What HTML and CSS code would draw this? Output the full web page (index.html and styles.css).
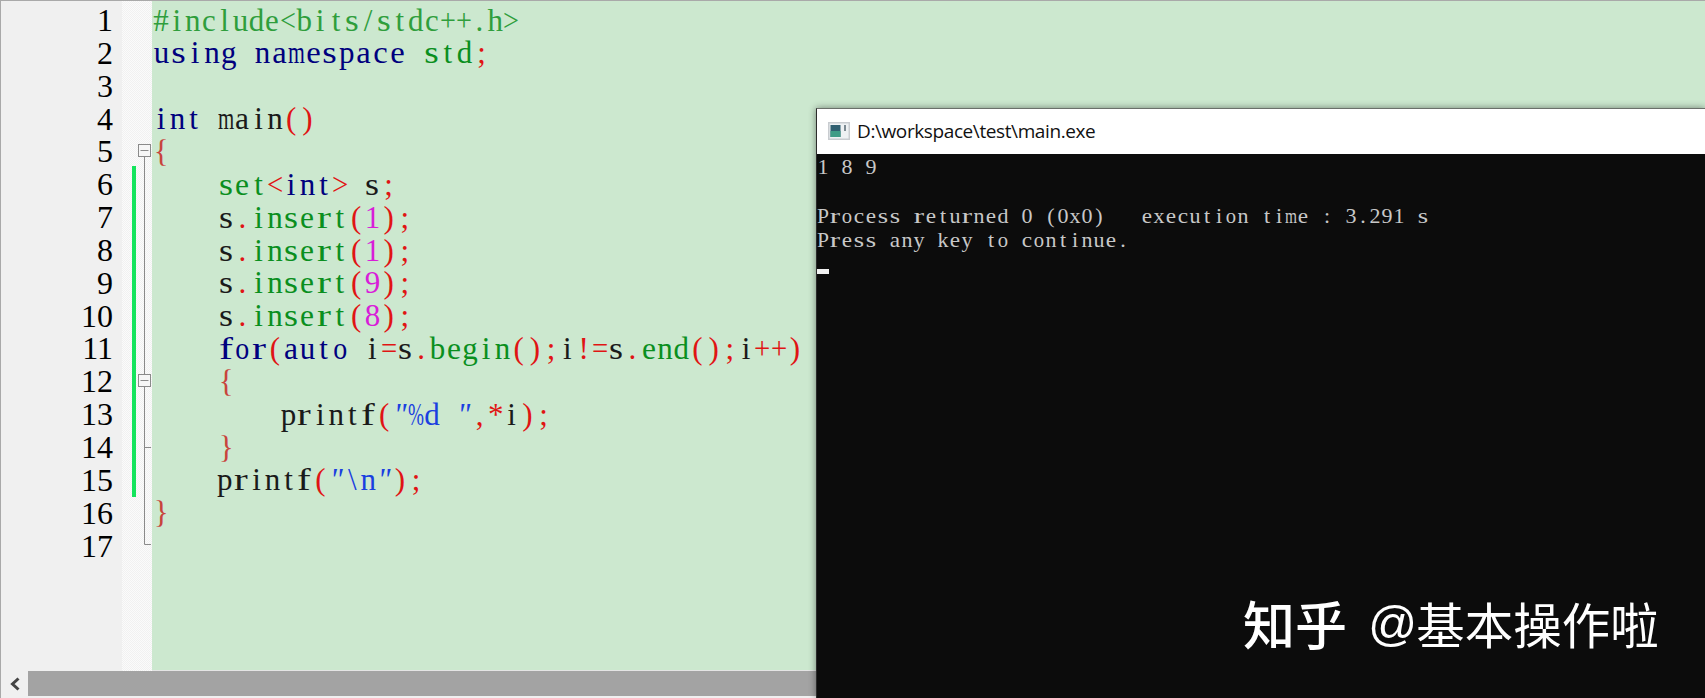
FILE: index.html
```html
<!DOCTYPE html>
<html lang="zh">
<head>
<meta charset="utf-8">
<title>main.cpp</title>
<link rel="stylesheet" href="styles.css">
</head>
<body>
<div class="editor">
  <div class="editor-main">
    <div class="gutter">
      <div>1</div><div>2</div><div>3</div><div>4</div><div>5</div><div>6</div><div>7</div><div>8</div><div>9</div><div>10</div><div>11</div><div>12</div><div>13</div><div>14</div><div>15</div><div>16</div><div>17</div>
    </div>
    <div class="fold-margin">
      <svg class="fold-svg" width="30" height="668" viewBox="0 0 30 668">
        <rect class="change-bar" x="10" y="165" width="4" height="331"/>
        <path class="fold-line" d="M22.5 156V543.5H29M22.5 446.5H29"/>
        <rect class="fold-box" x="16.5" y="143.5" width="12" height="12"/>
        <path class="fold-line" d="M18.5 149.5H26.5"/>
        <rect class="fold-box" x="16.5" y="373.5" width="12" height="12"/>
        <path class="fold-line" d="M18.5 379.5H26.5"/>
      </svg>
    </div>
    <div class="code">
      <div class="line line-pre"><span class="pre">#include&lt;bits/stdc++.h&gt;</span></div>
      <div class="line line-wide"><span class="kw">using</span> <span class="kw">namespace</span> <span class="fn">std</span><span class="op">;</span></div>
      <div class="line"> </div>
      <div class="line"><span class="kw">int</span> main<span class="op">()</span></div>
      <div class="line"><span class="brace">{</span></div>
      <div class="line">    <span class="fn">set</span><span class="op">&lt;</span><span class="kw">int</span><span class="op">&gt;</span> s<span class="op">;</span></div>
      <div class="line">    s<span class="op">.</span><span class="fn">insert</span><span class="op">(</span><span class="num">1</span><span class="op">);</span></div>
      <div class="line">    s<span class="op">.</span><span class="fn">insert</span><span class="op">(</span><span class="num">1</span><span class="op">);</span></div>
      <div class="line">    s<span class="op">.</span><span class="fn">insert</span><span class="op">(</span><span class="num">9</span><span class="op">);</span></div>
      <div class="line">    s<span class="op">.</span><span class="fn">insert</span><span class="op">(</span><span class="num">8</span><span class="op">);</span></div>
      <div class="line">    <span class="kw">for</span><span class="op">(</span><span class="kw">auto</span> i<span class="op">=</span>s<span class="op">.</span><span class="fn">begin</span><span class="op">();</span>i<span class="op">!=</span>s<span class="op">.</span><span class="fn">end</span><span class="op">();</span>i<span class="op">++)</span></div>
      <div class="line">    <span class="brace">{</span></div>
      <div class="line line-tight">        printf<span class="op">(</span><span class="str"><i class="q">"</i>%d <i class="q">"</i></span><span class="op">,*</span>i<span class="op">);</span></div>
      <div class="line">    <span class="brace">}</span></div>
      <div class="line line-tight">    printf<span class="op">(</span><span class="str"><i class="q">"</i>\n<i class="q">"</i></span><span class="op">);</span></div>
      <div class="line"><span class="brace">}</span></div>
      <div class="line"> </div>
    </div>
  </div>
  <div class="hscroll">
    <div class="hscroll-btn">
      <svg width="12" height="14" viewBox="0 0 12 14"><path class="chevron" d="M9.5 1.5L3.5 7L9.5 12.5"/></svg>
    </div>
    <div class="hscroll-thumb"></div>
  </div>
</div>

<section class="console">
  <header class="console-title">
    <svg class="console-icon" width="22" height="18" viewBox="0 0 22 18">
      <rect x="0" y="0" width="22" height="18" fill="#c9ccd0"/>
      <rect x="1.5" y="1.5" width="19" height="15" fill="#eef1f3"/>
      <rect x="2.5" y="3" width="10" height="12" fill="#2f5f70"/>
      <rect x="2.5" y="9" width="10" height="6" fill="#3f9c86"/>
      <rect x="16" y="3" width="2" height="6" fill="#7c8a92"/>
    </svg>
    <span>D:\workspace\test\main.exe</span>
  </header>
  <div class="console-body">
    <div class="out">1 8 9</div>
    <div class="out"> </div>
    <div class="out">Process returned 0 (0x0)   execution time : 3.291 s</div>
    <div class="out">Press any key to continue.</div>
    <div class="cursor"></div>
  </div>
</section>

<div class="watermark"><span class="wm-brand">知乎</span><span class="wm-at">@</span><span>基本操作啦</span></div>
<script src="cells.js"></script>
</body>
</html>
```
FILE: styles.css
```css
html, body {
  margin: 0;
  padding: 0;
}
body {
  position: relative;
  width: 1705px;
  height: 698px;
  overflow: hidden;
  background: #f0f0f0;
}
.editor {
  height: 698px;
  box-sizing: border-box;
  border: solid #a9a9a9;
  border-width: 1px 0 0 1px;
  display: flex;
  flex-direction: column;
}
.editor-main {
  flex: none;
  height: 670px;
  display: flex;
}
.gutter {
  flex: none;
  width: 121px;
  padding: 3px 9px 0 0;
  box-sizing: border-box;
  background: #f0f0f0;
  text-align: right;
  font: 32px/32.85px "Liberation Serif", serif;
  color: #000;
}
.fold-margin {
  flex: none;
  width: 30px;
  background-color: #f6f6f6;
  background-image: repeating-conic-gradient(#f1f1f1 0 25%, #fbfbfb 0 50%);
  background-size: 2px 2px;
}
.fold-svg {
  display: block;
}
.change-bar {
  fill: #14e45c;
}
.fold-line {
  fill: none;
  stroke: #8a8a8a;
  stroke-width: 1;
}
.fold-box {
  fill: #f6f6f6;
  stroke: #8a8a8a;
  stroke-width: 1;
}
.code {
  flex: 1;
  padding: 3.6px 0 0 1px;
  background: #cce8cf;
  font: 31px/32.85px "Liberation Serif", serif;
  color: #1a1a1a;
  border-bottom: 1px solid #e4e4e4;
  --cell: 16.25px;
}
.line {
  height: 32.85px;
  white-space: pre;
}
.line-pre {
  --cell: 15.93px;
}
.line-tight {
  --cell: 15.95px;
}
.line-wide {
  --cell: 16.85px;
}
.ch {
  display: inline-block;
  width: var(--cell);
  text-align: center;
  white-space: pre;
}
.ch-wide {
  text-align: left;
  transform-origin: left center;
}
.pre { color: #2f9e3c; }
.kw { color: #00007e; }
.fn { color: #0a8f1e; }
.op { color: #e01414; }
.brace { color: #c8443c; }
.num { color: #d81ed8; }
.str { color: #1a3fe0; }
.q { font-style: italic; }
.hscroll {
  flex: none;
  height: 27px;
  display: flex;
  background: #f0f0f0;
  padding-bottom: 2px;
  box-sizing: border-box;
}
.hscroll-btn {
  flex: none;
  width: 27px;
  display: flex;
  align-items: center;
  justify-content: center;
}
.chevron {
  fill: none;
  stroke: #444;
  stroke-width: 3;
}
.hscroll-thumb {
  flex: 1;
  background: #a3a3a3;
}
.console {
  position: absolute;
  left: 816px;
  top: 108px;
  right: 0;
  bottom: 0;
  display: flex;
  flex-direction: column;
  border-top: 1px solid #6a6f6a;
  border-left: 1px solid #2b2b2b;
  box-shadow: 0 0 7px rgba(0, 0, 0, .45);
}
.console-title {
  flex: none;
  height: 45px;
  background: #fff;
  display: flex;
  align-items: center;
  gap: 7px;
  padding: 0 0 2px 11px;
  box-sizing: border-box;
  font: 19px "Open Sans", "Liberation Sans", sans-serif;
  letter-spacing: -.4px;
  color: #111;
}
.console-icon {
  flex: none;
}
.console-body {
  flex: 1;
  background: #0c0c0c;
  padding-top: 1px;
  color: #c8c8c8;
  font: 22px/24.3px "Liberation Serif", serif;
  --cell: 12px;
}
.out {
  height: 24.3px;
  white-space: pre;
}
.cursor {
  width: 12px;
  height: 5px;
  margin-top: 17px;
  background: #f2f2f2;
}
.watermark {
  position: absolute;
  left: 1243px;
  top: 591px;
  display: flex;
  align-items: center;
  font: 48.5px/64px "Noto Sans CJK SC", sans-serif;
  color: #fff;
  white-space: nowrap;
}
.wm-brand {
  font-weight: 500;
  font-size: 52px;
}
.wm-at {
  margin-left: 21px;
  margin-right: -1px;
  font-family: "Liberation Sans", sans-serif;
}
```
FILE: cells.js
```js
// The editor and the console use a fixed-pitch serif font. None is installed,
// so each character gets a cell of its own. Wide glyphs are narrowed to fit,
// and the small round letters are widened, as they are in a fixed-pitch face.
(function () {
  var ctx = document.createElement('canvas').getContext('2d');
  var ROUND = 'acefrsoz';

  function fill(node, cell) {
    Array.prototype.slice.call(node.childNodes).forEach(function (child) {
      if (child.nodeType === 1) {
        fill(child, cell);
        return;
      }
      var frag = document.createDocumentFragment();
      child.nodeValue.split('').forEach(function (c) {
        var span = document.createElement('span');
        span.className = 'ch';
        span.textContent = c;
        var w = ctx.measureText(c).width;
        if (w > cell) {
          span.className = 'ch ch-wide';
          span.style.transform = 'scaleX(' + (cell / w).toFixed(3) + ')';
        } else if (ROUND.indexOf(c) >= 0) {
          span.style.transform = 'scaleX(' + (cell * 0.86 / w).toFixed(3) + ')';
        }
        frag.appendChild(span);
      });
      node.replaceChild(frag, child);
    });
  }

  document.querySelectorAll('.line, .out').forEach(function (row) {
    var style = getComputedStyle(row);
    ctx.font = style.fontSize + ' ' + style.fontFamily;
    fill(row, parseFloat(style.getPropertyValue('--cell')));
  });
})();
```
